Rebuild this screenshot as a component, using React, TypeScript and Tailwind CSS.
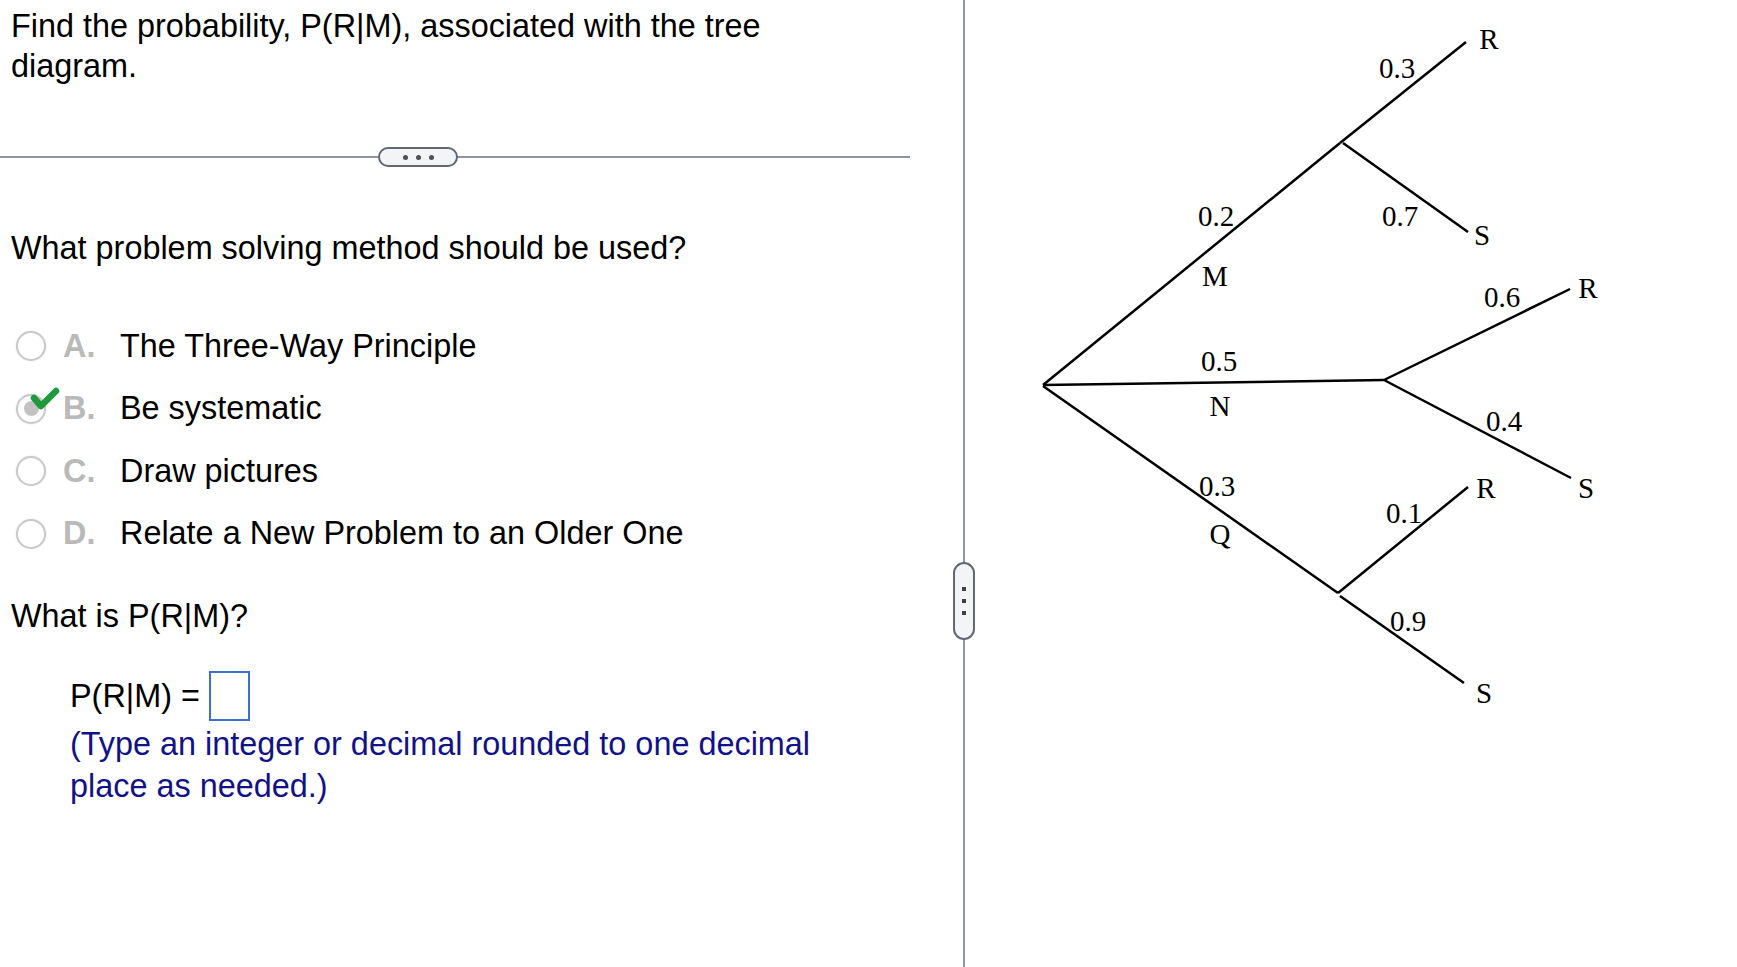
import React from 'react'

/** 選択肢 */
const OPTIONS = [
  { letter: 'A.', text: 'The Three-Way Principle', selected: false },
  { letter: 'B.', text: 'Be systematic', selected: true },
  { letter: 'C.', text: 'Draw pictures', selected: false },
  { letter: 'D.', text: 'Relate a New Problem to an Older One', selected: false },
]

/** 樹形図の枝 */
const BRANCHES: [number, number, number, number][] = [
  [1043, 385, 1340, 143],
  [1340, 143, 1466, 42],
  [1343, 143, 1468, 232],
  [1043, 385, 1384, 380],
  [1384, 380, 1570, 289],
  [1384, 380, 1571, 478],
  [1043, 386, 1338, 593],
  [1338, 593, 1468, 487],
  [1340, 596, 1464, 683],
]

/** 樹形図のラベル */
const LABELS: { x: number; y: number; t: string }[] = [
  { x: 1489, y: 39, t: 'R' },
  { x: 1397, y: 68, t: '0.3' },
  { x: 1216, y: 216, t: '0.2' },
  { x: 1400, y: 216, t: '0.7' },
  { x: 1482, y: 235, t: 'S' },
  { x: 1215, y: 276, t: 'M' },
  { x: 1502, y: 297, t: '0.6' },
  { x: 1588, y: 288, t: 'R' },
  { x: 1219, y: 361, t: '0.5' },
  { x: 1220, y: 406, t: 'N' },
  { x: 1504, y: 421, t: '0.4' },
  { x: 1586, y: 488, t: 'S' },
  { x: 1217, y: 486, t: '0.3' },
  { x: 1486, y: 488, t: 'R' },
  { x: 1404, y: 513, t: '0.1' },
  { x: 1220, y: 534, t: 'Q' },
  { x: 1408, y: 621, t: '0.9' },
  { x: 1484, y: 693, t: 'S' },
]

const Radio: React.FC<{ selected: boolean }> = ({ selected }) => (
  <div className="relative w-[30px] h-[30px] shrink-0">
    <div className="w-[30px] h-[30px] rounded-full border-2 border-[#c9c9c9] shadow-[0_0_2px_rgba(0,0,0,0.12)] flex items-center justify-center bg-white">
      {selected && <div className="w-[15px] h-[15px] rounded-full bg-[#c2c2c2]" />}
    </div>
    {selected && (
      <svg className="absolute left-[14px] top-[-7px]" width="30" height="24" viewBox="0 0 30 24">
        <path d="M4 11 L11 19 L26 4" fill="none" stroke="#1f9a3a" strokeWidth="6.5" strokeLinecap="round" strokeLinejoin="round" />
      </svg>
    )}
  </div>
)

export default function App() {
  return (
    <div
      className="flex w-[1737px] h-[967px] bg-white overflow-hidden text-black"
      style={{ fontFamily: '"Liberation Sans", Arial, sans-serif' }}
    >
      {/* 左パネル */}
      <div className="w-[963px] shrink-0">
        <p className="w-[800px] pl-[11px] pt-[6px] text-[32.4px] leading-[40px]">
          Find the probability, P(R|M), associated with the tree diagram.
        </p>

        {/* 区切り線 */}
        <div className="relative mt-[70px] w-[910px] h-[2px] bg-[#8c95a1]">
          <div className="absolute left-[378px] top-[-9px] w-[80px] h-[20px] rounded-full border-2 border-[#5f6875] bg-[#f3f4f6] flex items-center justify-center gap-[8px]">
            <span className="w-[5px] h-[5px] rounded-full bg-[#4a5059]" />
            <span className="w-[5px] h-[5px] rounded-full bg-[#4a5059]" />
            <span className="w-[5px] h-[5px] rounded-full bg-[#4a5059]" />
          </div>
        </div>

        <p className="mt-[70px] pl-[11px] text-[32.4px] leading-[40px]">
          What problem solving method should be used?
        </p>

        <div className="mt-[47px] flex flex-col">
          {OPTIONS.map((o) => (
            <div key={o.letter} className="flex items-center h-[62.5px] pl-[16px]">
              <Radio selected={o.selected} />
              <span className="ml-[17px] w-[57px] text-[32.4px] font-bold text-[#b9b9b9]">{o.letter}</span>
              <span className="text-[32.4px]">{o.text}</span>
            </div>
          ))}
        </div>

        <p className="mt-[31px] pl-[11px] text-[32.4px] leading-[40px]">What is P(R|M)?</p>

        <div className="mt-[35px] pl-[70px] flex items-center">
          <span className="text-[32.4px] leading-[40px]">P(R|M) =</span>
          <div className="ml-[9px] w-[41px] h-[50px] border-2 border-[#3b6fd1]" />
        </div>
        <p className="mt-[2px] pl-[70px] w-[870px] text-[32.4px] leading-[42px] text-[#121288]">
          (Type an integer or decimal rounded to one decimal place as needed.)
        </p>
      </div>

      {/* 縦の区切り */}
      <div className="relative w-[2px] h-full shrink-0 bg-[#8c95a1]">
        <div className="absolute top-[562px] left-[-10px] w-[22px] h-[78px] rounded-full border-2 border-[#5f6875] bg-[#f3f4f6] flex flex-col items-center justify-center gap-[8px]">
          <span className="w-[4px] h-[4px] bg-[#3b3f46]" />
          <span className="w-[4px] h-[4px] bg-[#3b3f46]" />
          <span className="w-[4px] h-[4px] bg-[#3b3f46]" />
        </div>
      </div>

      {/* 樹形図 */}
      <div className="flex-1">
        <svg width="772" height="967" viewBox="965 0 772 967">
          {BRANCHES.map(([x1, y1, x2, y2], i) => (
            <line key={i} x1={x1} y1={y1} x2={x2} y2={y2} stroke="#000" strokeWidth="2.5" />
          ))}
          {LABELS.map((l, i) => (
            <text
              key={i}
              x={l.x}
              y={l.y}
              textAnchor="middle"
              dominantBaseline="central"
              fontSize="29"
              fontFamily='"Liberation Serif", "Times New Roman", serif'
              fill="#000"
            >
              {l.t}
            </text>
          ))}
        </svg>
      </div>
    </div>
  )
}
